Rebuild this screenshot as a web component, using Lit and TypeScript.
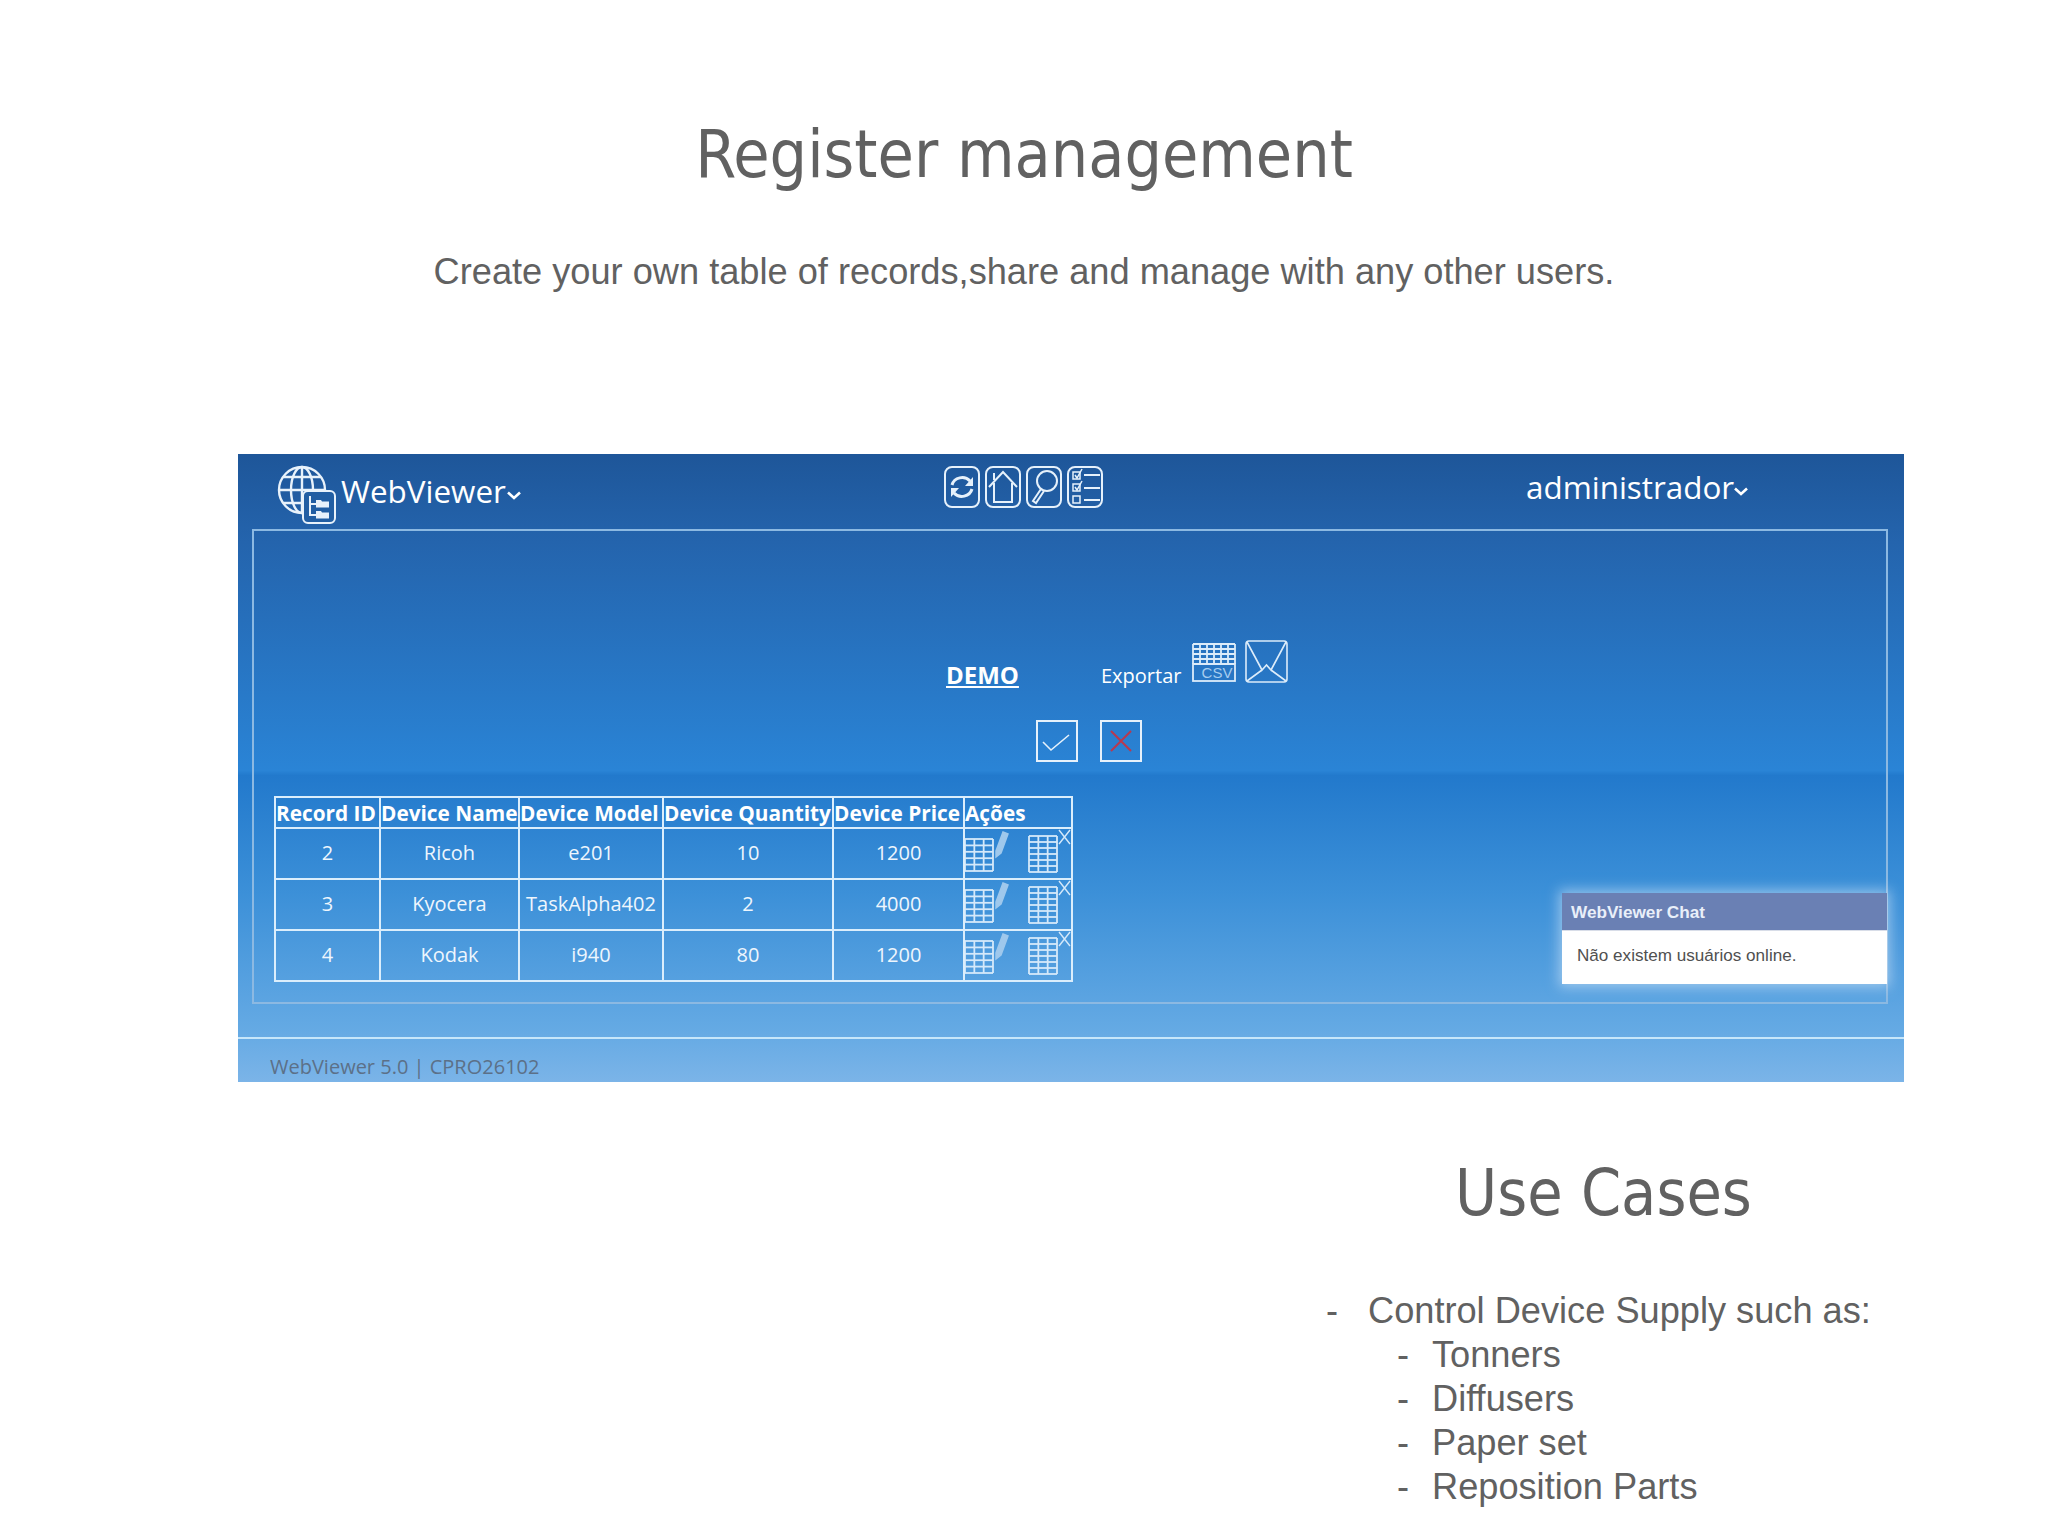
import { LitElement, html, css, svg } from "lit";
import { customElement } from "lit/decorators.js";

const rows = [
  ["2", "Ricoh", "e201", "10", "1200"],
  ["3", "Kyocera", "TaskAlpha402", "2", "4000"],
  ["4", "Kodak", "i940", "80", "1200"],
];
const heads = ["Record ID", "Device Name", "Device Model", "Device Quantity", "Device Price", "Ações"];

function gridLines(x: number, y: number, w: number, h: number, cols: number, rws: number) {
  const parts = [];
  for (let i = 0; i <= cols; i++) {
    const px = x + (w * i) / cols;
    parts.push(svg`<line x1=${px} y1=${y} x2=${px} y2=${y + h}></line>`);
  }
  for (let i = 0; i <= rws; i++) {
    const py = y + (h * i) / rws;
    parts.push(svg`<line x1=${x} y1=${py} x2=${x + w} y2=${py}></line>`);
  }
  return parts;
}

const actionIcons = html`<svg class="actions" width="107" height="49" viewBox="0 0 107 49" fill="none" stroke="#d5e9fa" stroke-width="1.8">
  ${gridLines(0, 10, 28, 32, 3, 5)}
  <path d="M31 22 L38 3 L43 5 L36 24 L31 28 Z" fill="#9fc8ec" stroke="#9fc8ec" stroke-width="1.5"></path>
  ${gridLines(64, 7, 28, 36, 3, 6)}
  <path d="M94 1 L105 15 M105 1 L94 15" stroke-width="1.4"></path>
</svg>`;

@customElement("app-root")
export class AppRoot extends LitElement {
  static styles = css`
    :host { display: block; width: 2048px; height: 1536px; overflow: hidden; background: #fff; color: #616161; }
    .title { margin: 0; font: 400 65.7px/80px "DejaVu Sans Condensed", "DejaVu Sans", sans-serif; font-stretch: condensed; color: #616161; }
    .hero { padding-top: 114px; text-align: center; }
    .sub { margin: 56px 0 0; font: 400 36.2px/44px "Liberation Sans", sans-serif; color: #616161; }
    .panel {
      margin: 160px 0 0 238px; width: 1666px; height: 628px; display: flex; flex-direction: column; color: #fff;
      font-family: "Open Sans", sans-serif;
      background: linear-gradient(180deg, #1e5699 0%, #2464ad 14%, #2a84d6 50.4%, #2279cc 51.2%, #3c90d8 70%, #65aae4 92%, #7bb4e8 100%);
    }
    .bar { height: 75px; display: grid; grid-template-columns: 706px 582px 1fr; align-items: start; flex: none; }
    .brand { display: flex; align-items: center; padding: 11px 0 0 39px; gap: 4px; }
    .brand span { font-size: 31.4px; line-height: 44px; margin-bottom: 9px; }
    .user { font-size: 31.4px; line-height: 44px; }
    .chev { margin-left: -3px; }
    .tools { display: flex; gap: 5px; padding-top: 12px; }
    .userwrap { display: flex; align-items: center; padding-top: 11px; gap: 0; }
    .chev2 { margin: 8px 0 0; }
    .frame { flex: none; height: 475px; margin-left: 14px; width: 1636px; box-sizing: border-box; border: 2px solid #8cb9e2; position: relative; }
    .export { display: flex; align-items: flex-end; padding: 110px 0 0 692px; height: 51px; }
    .export svg { margin-bottom: 9px; }
    .demo { font-weight: 700; font-size: 24px; line-height: 34px; text-decoration: underline; width: 155px; flex: none; }
    .exp { font-size: 20px; line-height: 32px; width: 91px; flex: none; }
    .mail { margin-left: 9px; }
    .confirm { display: flex; gap: 22px; padding: 28px 0 0 782px; }
    .confirm svg { display: block; }
    table { margin: 34px 0 0 20px; border-collapse: collapse; table-layout: fixed; width: 799px; font-size: 20px; }
    th, td { border: 2px solid #dbeefc; padding: 0; overflow: hidden; white-space: nowrap; }
    th { height: 29px; font-weight: 700; text-align: left; font-size: 20.8px; line-height: 28px; padding-left: 0; }
    td { height: 47px; padding-bottom: 2px; text-align: center; line-height: 26px; color: #eef6fd; }
    td.a { text-align: left; vertical-align: top; padding-bottom: 0; height: 49px; }
    .actions { display: block; }
    .chat {
      position: absolute; right: -1px; top: 362px; width: 325px; background: #fff;
      box-shadow: 0 0 12px 3px rgba(220, 235, 250, .55); font-family: "Liberation Sans", sans-serif;
    }
    .chat header { height: 38px; background: #6a80b4; color: #e9eff9; font-weight: 700; font-size: 17.2px; line-height: 38px; padding-left: 9px; border-bottom: 1px solid #d8dde8; box-sizing: border-box; }
    .chat p { margin: 0; height: 53px; padding-left: 15px; font-size: 17.1px; line-height: 50px; color: #505050; }
    .foot { flex: none; margin-top: 33px; border-top: 2px solid #c6e6fa; padding: 12px 0 0 32px; font-size: 20px; line-height: 32px; color: #5c7088; }
    .uses { display: flex; flex-direction: column; align-items: flex-start; padding-left: 1326px; }
    .uses .title { align-self: flex-start; margin: 71px 0 0 129px; font-size: 64px; }
    ul { list-style: none; margin: 0; padding: 0; font: 400 36.2px/44px "Liberation Sans", sans-serif; color: #616161; }
    .l1 { margin-top: 56px; }
    li { display: flex; }
    li i { font-style: normal; flex: none; }
    .l1 > li > i { width: 42px; }
    .l2 { padding-left: 71px; }
    .l2 li i { width: 35px; }
  `;

  render() {
    return html`
      <section class="hero">
        <h1 class="title">Register management</h1>
        <p class="sub">Create your own table of records,share and manage with any other users.</p>
      </section>
      <section class="panel">
        <div class="bar">
          <div class="brand">
            <svg width="60" height="60" viewBox="0 0 60 60" fill="none" stroke="#e8f2fb" stroke-width="2.4">
              <circle cx="25" cy="25" r="23"></circle>
              <ellipse cx="25" cy="25" rx="11" ry="23"></ellipse>
              <path d="M25 2V48M2 25H48M6 12H44M6 38H44"></path>
              <rect x="26" y="26" width="32" height="32" rx="5" fill="#215ea3" stroke-width="2"></rect>
              <path d="M33 31V50H39M33 39H39" stroke-width="2"></path>
              <path d="M39 35h5l1 1.500h7v6H39ZM39 46h5l1 1.500h7v6H39Z" fill="#e8f2fb" stroke="none"></path>
            </svg>
            <span>WebViewer</span>
            <svg class="chev" width="14" height="9" viewBox="0 0 14 9" fill="none" stroke="#fff" stroke-width="2.600"><path d="M1 1.500L7 7L13 1.500"></path></svg>
          </div>
          <div class="tools">
            <svg width="36" height="42" viewBox="0 0 36 42" fill="none" stroke="#e6f1fb" stroke-width="2"><rect x="1" y="1" width="34" height="40" rx="7"></rect><path d="M8 19A10.500 10 0 0 1 26 15M28 23A10.500 10 0 0 1 10 27" stroke-width="3"></path><path d="M29 11V20H21ZM7 31V22H15Z" fill="#e6f1fb" stroke="none"></path></svg>
            <svg width="36" height="42" viewBox="0 0 36 42" fill="none" stroke="#e6f1fb" stroke-width="2"><rect x="1" y="1" width="34" height="40" rx="7"></rect><path d="M4 21L18 6L32 21M9 17V36H27V17M9 7V14"></path></svg>
            <svg width="36" height="42" viewBox="0 0 36 42" fill="none" stroke="#e6f1fb" stroke-width="2"><rect x="1" y="1" width="34" height="40" rx="7"></rect><circle cx="21" cy="15" r="10"></circle><path d="M15 23L7 35L10 37L18 25"></path></svg>
            <svg width="36" height="42" viewBox="0 0 36 42" fill="none" stroke="#e6f1fb" stroke-width="2"><rect x="1" y="1" width="34" height="40" rx="7"></rect><path d="M17 9H33M17 22H33M17 34H33"></path><path d="M6 6h7v7H6ZM6 18h7v7H6ZM6 30h7v7H6Z" stroke-width="1.500"></path><path d="M8 9l2 3L15 3M8 21l2 3L15 15" stroke-width="1.500"></path></svg>
          </div>
          <div class="userwrap">
            <div class="user">administrador</div>
            <svg class="chev2" width="14" height="9" viewBox="0 0 14 9" fill="none" stroke="#fff" stroke-width="2.600"><path d="M1 1.500L7 7L13 1.500"></path></svg>
          </div>
        </div>
        <div class="frame">
          <div class="export">
            <div class="demo">DEMO</div>
            <div class="exp">Exportar</div>
            <svg width="44" height="40" viewBox="0 0 44 40" fill="none" stroke="#dcecfa" stroke-width="1.800">
              ${gridLines(1, 1, 42, 20, 6, 4)}
              <rect x="1" y="21" width="42" height="17"></rect>
              <text x="25" y="35" text-anchor="middle" font-family="Liberation Sans, sans-serif" font-size="15" fill="#a6cdef" stroke="none">CSV</text>
            </svg>
            <svg class="mail" width="43" height="43" viewBox="0 0 43 43" fill="none" stroke="#dcecfa" stroke-width="1.600">
              <rect x="1" y="1" width="41" height="41" rx="3"></rect>
              <path d="M2 2L17 30L21.500 25L26 30L41 2M2 41L17 30M41 41L26 30"></path>
            </svg>
          </div>
          <div class="confirm">
            <svg width="42" height="42" viewBox="0 0 42 42" fill="none" stroke="#e6f1fb" stroke-width="2"><rect x="1" y="1" width="40" height="40"></rect><path d="M7 22L15 30L33 15" stroke-width="1.600"></path></svg>
            <svg width="42" height="42" viewBox="0 0 42 42" fill="none" stroke="#e6f1fb" stroke-width="2"><rect x="1" y="1" width="40" height="40"></rect><path d="M11 11L31 31M31 11L11 31" stroke="#b9394f" stroke-width="2"></path></svg>
          </div>
          <table>
            <colgroup><col style="width:105px" /><col style="width:139px" /><col style="width:144px" /><col style="width:170px" /><col style="width:131px" /><col style="width:108px" /></colgroup>
            <thead><tr>${heads.map((h) => html`<th>${h}</th>`)}</tr></thead>
            <tbody>
              ${rows.map((r) => html`<tr>${r.map((c) => html`<td>${c}</td>`)}<td class="a">${actionIcons}</td></tr>`)}
            </tbody>
          </table>
          <aside class="chat">
            <header>WebViewer Chat</header>
            <p>Não existem usuários online.</p>
          </aside>
        </div>
        <footer class="foot">WebViewer 5.0 | CPRO26102</footer>
      </section>
      <section class="uses">
        <h2 class="title">Use Cases</h2>
        <ul class="l1">
          <li><i>-</i><span>Control Device Supply such as:</span></li>
        </ul>
        <ul class="l2">
          <li><i>-</i><span>Tonners</span></li>
          <li><i>-</i><span>Diffusers</span></li>
          <li><i>-</i><span>Paper set</span></li>
          <li><i>-</i><span>Reposition Parts</span></li>
        </ul>
      </section>
    `;
  }
}
